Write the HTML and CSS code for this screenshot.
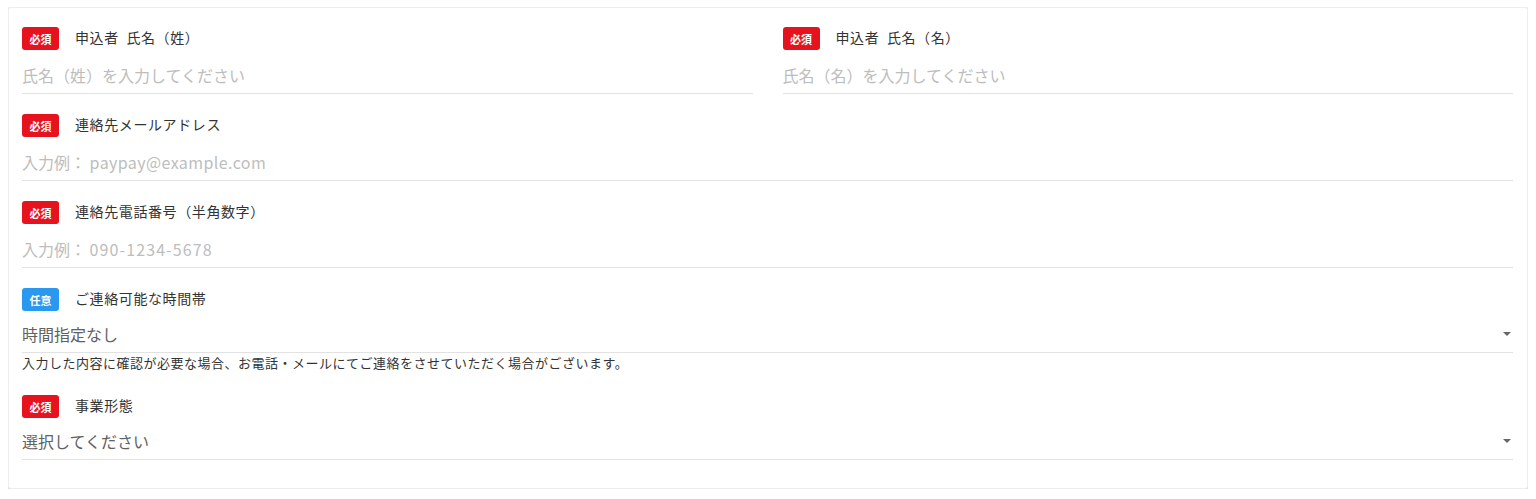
FILE: index.html
```html
<!DOCTYPE html>
<html lang="ja">
<head>
<meta charset="utf-8">
<link rel="stylesheet" href="styles.css">
</head>
<body>
<div class="card">
  <div class="row two">
    <div class="field">
      <div class="label"><span class="badge req">必須</span><span class="ltext">申込者&ensp;氏名（姓）</span></div>
      <div class="input placeholder">氏名（姓）を入力してください</div>
    </div>
    <div class="field">
      <div class="label"><span class="badge req">必須</span><span class="ltext">申込者&ensp;氏名（名）</span></div>
      <div class="input placeholder">氏名（名）を入力してください</div>
    </div>
  </div>
  <div class="row">
    <div class="field">
      <div class="label"><span class="badge req">必須</span><span class="ltext">連絡先メールアドレス</span></div>
      <div class="input placeholder">入力例：&nbsp;<span class="lat">paypay@example.com</span></div>
    </div>
  </div>
  <div class="row">
    <div class="field">
      <div class="label"><span class="badge req">必須</span><span class="ltext">連絡先電話番号（半角数字）</span></div>
      <div class="input placeholder">入力例：&nbsp;<span class="lat num">090-1234-5678</span></div>
    </div>
  </div>
  <div class="row tight">
    <div class="field">
      <div class="label"><span class="badge opt">任意</span><span class="ltext">ご連絡可能な時間帯</span></div>
      <div class="input select"><span>時間指定なし</span><span class="arrow"></span></div>
      <div class="help">入力した内容に確認が必要な場合、お電話・メールにてご連絡をさせていただく場合がございます。</div>
    </div>
  </div>
  <div class="row last">
    <div class="field">
      <div class="label"><span class="badge req">必須</span><span class="ltext">事業形態</span></div>
      <div class="input select"><span>選択してください</span><span class="arrow"></span></div>
    </div>
  </div>
</div>
</body>
</html>
```
FILE: styles.css
```css
html, body {
  background: #ffffff;
}
body {
  margin: 7px 8px 8px 8px;
  font-family: "Noto Sans CJK JP", "Noto Sans", sans-serif;
  color: #333;
}
.card {
  background: #fff;
  border: 1px solid #ededed;
  box-shadow: 0 1px 5px rgba(0,0,0,0.3);
  border-radius: 3px;
  padding: 19px 14px 28px 13px;
}
.row {
  margin-bottom: 20px;
}
.row.tight {
  margin-bottom: 24px;
}
.row.last {
  margin-bottom: 0;
}
.row.two {
  display: grid;
  grid-template-columns: 1fr 1fr;
  column-gap: 30px;
}
.label {
  display: flex;
  align-items: center;
  height: 23px;
}
.badge {
  display: inline-flex;
  align-items: center;
  justify-content: center;
  width: 37px;
  height: 23px;
  border-radius: 3px;
  color: #fff;
  font-size: 11px;
  font-weight: 700;
}
.badge.req { background: #e6131e; }
.badge.opt { background: #2a98ef; }
.ltext {
  margin-left: 16px;
  padding-bottom: 4px;
  font-size: 14px;
  letter-spacing: 0.6px;
  color: #333;
  line-height: 1;
}
.input {
  margin-top: 6px;
  border-bottom: 1px solid #e2e2e2;
  display: flex;
  align-items: center;
  font-size: 16px;
  box-sizing: border-box;
  height: 38px;
  white-space: pre;
}
.placeholder {
  color: #bdbdbd;
}
.lat {
  letter-spacing: 0.4px;
}
.lat.num {
  letter-spacing: 1.1px;
}
.select {
  margin-top: 5px;
  height: 37px;
  color: #616161;
  justify-content: space-between;
}
.arrow {
  width: 0;
  height: 0;
  border-left: 4px solid transparent;
  border-right: 4px solid transparent;
  border-top: 4px solid #666;
  margin-right: 2px;
}
.help {
  margin-top: 2px;
  font-size: 13px;
  letter-spacing: 0.5px;
  line-height: 16px;
  color: #333;
}
```
